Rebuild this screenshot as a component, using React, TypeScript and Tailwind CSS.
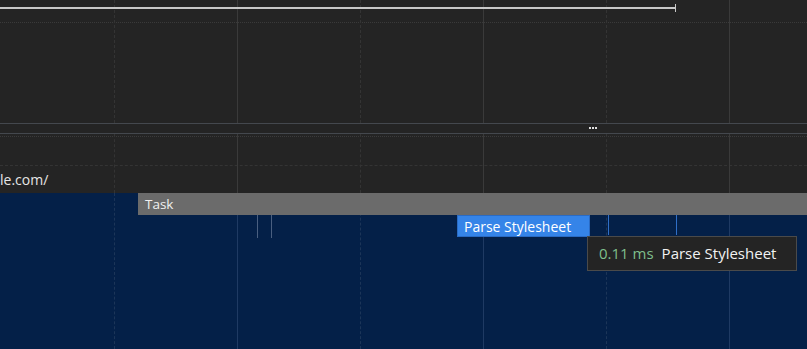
import React from 'react';

const FONT = { fontFamily: '"Segoe UI", "Open Sans", "Noto Sans", sans-serif' };

// x positions of the time grid, alternating dashed (minor) and solid (major)
const GRID = [
  { x: 114, major: false },
  { x: 237, major: true },
  { x: 360, major: false },
  { x: 483, major: true },
  { x: 606, major: false },
  { x: 729, major: true },
];

function GridLines({ dark }: { dark?: boolean }) {
  return (
    <div className="pointer-events-none absolute inset-0">
      {GRID.map(g => (
        <div
          key={g.x}
          className={
            g.major
              ? dark
                ? 'absolute top-0 bottom-0 w-px bg-[#1f3a63]'
                : 'absolute top-0 bottom-0 w-px bg-[#3a3a3a]'
              : dark
                ? 'absolute top-0 bottom-0 w-0 border-l border-dashed border-[#1c3558]'
                : 'absolute top-0 bottom-0 w-0 border-l border-dashed border-[#343434]'
          }
          style={{ left: g.x }}
        />
      ))}
    </div>
  );
}

export default function App() {
  return (
    <div className="flex h-[349px] w-[807px] flex-col overflow-hidden bg-[#242424] text-white" style={FONT}>
      {/* Overview pane */}
      <div className="relative flex h-[123px] shrink-0 flex-col pt-[7px]">
        <GridLines />
        <div className="relative flex h-[8px] w-[676px] items-start">
          <div className="h-[2px] flex-1 bg-[#c8c8c8]" />
          <div className="-mt-[3px] h-[8px] w-px bg-[#c8c8c8]" />
        </div>
        <div className="mt-[7px] border-t border-dotted border-[#3a3a3a]" />
      </div>

      {/* Splitter */}
      <div className="flex h-[11px] shrink-0 items-start border-y border-[#44484e] pl-[589px] pt-[3px]">
        <div className="flex gap-[1px]">
          <span className="h-[2px] w-[2px] bg-[#e0e0e0]" />
          <span className="h-[2px] w-[2px] bg-[#e0e0e0]" />
          <span className="h-[2px] w-[2px] bg-[#e0e0e0]" />
        </div>
      </div>

      {/* Network / URL track */}
      <div className="relative flex h-[59px] shrink-0 flex-col pt-[2px]">
        <GridLines />
        <div className="border-t border-dotted border-[#3a3a3a]" />
        <div className="mt-[28px] border-t border-dashed border-[#343434]" />
        <div className="relative mt-[5px] text-[14px] leading-[18px] text-[#e6e6e6]">le.com/</div>
      </div>

      {/* Main thread flame chart */}
      <div className="relative flex flex-1 flex-col bg-[#042048]">
        <GridLines dark />
        <div className="relative ml-[138px] flex h-[22px] items-center bg-[#6b6b6b] pl-[7px] text-[13.5px] text-[#f0f0f0]">
          Task
        </div>
        <div className="relative flex h-[23px] items-stretch">
          <div className="ml-[257px] w-px bg-[#4a5f80]" />
          <div className="ml-[13px] w-px bg-[#4a5f80]" />
          <div className="ml-[185px] flex h-[22px] w-[133px] items-center border border-[#2a6bc4] bg-[#3584e8] pl-[6px] text-[14px] text-white">
            Parse Stylesheet
          </div>
          <div className="ml-[18px] mb-[3px] w-px bg-[#2f6fc8]" />
          <div className="ml-[67px] mb-[3px] w-px bg-[#2f6fc8]" />
        </div>

        {/* Tooltip */}
        <div className="absolute left-[587px] top-[43px] flex h-[35px] w-[210px] items-center gap-[8px] border border-[#4a4a4a] bg-[#242424] pl-[11px] text-[15px]">
          <span className="text-[#7fbf8c]">0.11 ms</span>
          <span className="text-[#f2f2f2]">Parse Stylesheet</span>
        </div>
      </div>
    </div>
  );
}
